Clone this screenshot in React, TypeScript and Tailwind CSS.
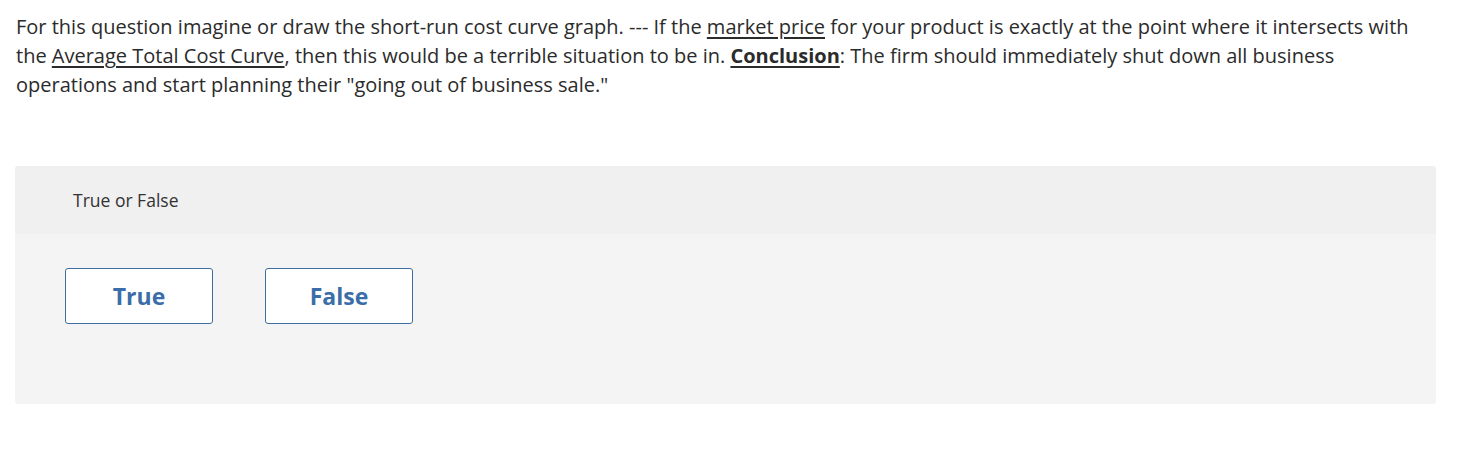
export default function App() {
  return (
    <div className="min-h-[466px] bg-white text-[#2b2b2b]" style={{ fontFamily: "'Open Sans', Lato, sans-serif" }}>
      <p className="pl-4 pr-10 pt-[12px] text-[20px] leading-[29px]">
        For this question imagine or draw the short-run cost curve graph. --- If the{" "}
        <span className="underline underline-offset-[3px]">market price</span> for your product is exactly at the point where it intersects with
        <br />
        the <span className="underline underline-offset-[3px]">Average Total Cost Curve</span>, then this would be a terrible situation to be in.{" "}
        <span className="font-bold underline underline-offset-[3px]">Conclusion</span>: The firm should immediately shut down all business
        <br />
        operations and start planning their "going out of business sale."
      </p>

      <div className="mx-[15px] mt-[67px] w-[1421px] overflow-hidden rounded-[3px] bg-[#f4f4f4]">
        <div className="flex h-[68px] items-center bg-[#f0f0f0] pl-[58px] text-[17.5px] text-[#333]">
          True or False
        </div>
        <div className="flex h-[170px] items-start gap-[52px] pl-[50px] pt-[34px]">
          <button className="h-[56px] w-[148px] rounded-[3px] border border-[#3d6e9f] bg-white text-[23px] font-bold text-[#3b6ea8]">
            True
          </button>
          <button className="h-[56px] w-[148px] rounded-[3px] border border-[#3d6e9f] bg-white text-[23px] font-bold text-[#3b6ea8]">
            False
          </button>
        </div>
      </div>
    </div>
  );
}
